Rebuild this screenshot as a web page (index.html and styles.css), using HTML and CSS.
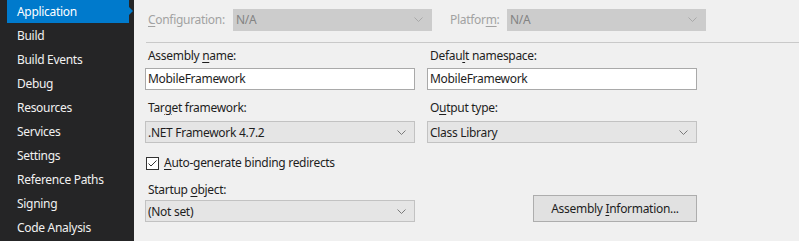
FILE: index.html
```html
<!DOCTYPE html>
<html>
<head>
<meta charset="utf-8">
<link rel="stylesheet" href="styles.css">
</head>
<body>
<div class="app">
  <nav class="sidebar">
    <div class="nav-item selected">Application</div>
    <div class="nav-item">Build</div>
    <div class="nav-item">Build Events</div>
    <div class="nav-item">Debug</div>
    <div class="nav-item">Resources</div>
    <div class="nav-item">Services</div>
    <div class="nav-item">Settings</div>
    <div class="nav-item">Reference Paths</div>
    <div class="nav-item">Signing</div>
    <div class="nav-item">Code Analysis</div>
  </nav>
  <main class="main">
    <div class="topbar">
      <span class="top-label disabled config-label"><u>C</u>onfiguration:</span>
      <div class="select disabled-select top-select">
        <span class="value">N/A</span>
        <svg class="chev" width="9" height="5" viewBox="0 0 9 5"><polyline points="0.5,0.5 4.5,4.5 8.5,0.5" fill="none" stroke="#a9a9a9" stroke-width="1"/></svg>
      </div>
      <span class="top-label disabled platform-label">Platfor<u>m</u>:</span>
      <div class="select disabled-select top-select">
        <span class="value">N/A</span>
        <svg class="chev" width="9" height="5" viewBox="0 0 9 5"><polyline points="0.5,0.5 4.5,4.5 8.5,0.5" fill="none" stroke="#a9a9a9" stroke-width="1"/></svg>
      </div>
    </div>
    <div class="divider"></div>
    <div class="form">
      <div class="row row-1">
        <div class="field">
          <div class="label">Assembly <u>n</u>ame:</div>
          <div class="input">MobileFramework</div>
        </div>
        <div class="field">
          <div class="label">Defau<u>l</u>t namespace:</div>
          <div class="input">MobileFramework</div>
        </div>
      </div>
      <div class="row row-2">
        <div class="field">
          <div class="label">Tar<u>g</u>et framework:</div>
          <div class="select">
            <span class="value">.NET Framework 4.7.2</span>
            <svg class="chev" width="9" height="5" viewBox="0 0 9 5"><polyline points="0.5,0.5 4.5,4.5 8.5,0.5" fill="none" stroke="#7a7a7a" stroke-width="1"/></svg>
          </div>
        </div>
        <div class="field">
          <div class="label">O<u>u</u>tput type:</div>
          <div class="select">
            <span class="value">Class Library</span>
            <svg class="chev" width="9" height="5" viewBox="0 0 9 5"><polyline points="0.5,0.5 4.5,4.5 8.5,0.5" fill="none" stroke="#7a7a7a" stroke-width="1"/></svg>
          </div>
        </div>
      </div>
      <div class="row row-3">
        <label class="check">
          <span class="box"><svg width="11" height="11" viewBox="0 0 11 11"><polyline points="1.5,5.5 4,8 9.5,2.5" fill="none" stroke="#333" stroke-width="1"/></svg></span>
          <span class="check-text"><u>A</u>uto-generate binding redirects</span>
        </label>
      </div>
      <div class="row row-4">
        <div class="field">
          <div class="label">Startup <u>o</u>bject:</div>
          <div class="select">
            <span class="value">(Not set)</span>
            <svg class="chev" width="9" height="5" viewBox="0 0 9 5"><polyline points="0.5,0.5 4.5,4.5 8.5,0.5" fill="none" stroke="#7a7a7a" stroke-width="1"/></svg>
          </div>
        </div>
        <div class="button-cell">
          <div class="button">Assembly <u>I</u>nformation...</div>
        </div>
      </div>
    </div>
  </main>
</div>
</body>
</html>
```

FILE: styles.css
```css
* { box-sizing: border-box; }
html, body { margin: 0; padding: 0; }
body {
  width: 799px;
  height: 241px;
  overflow: hidden;
  font-family: "Noto Sans", "Open Sans", sans-serif;
  font-size: 12px;
  letter-spacing: -0.3px;
  color: #1e1e1e;
  background: #f0f0f0;
}
u { text-decoration-thickness: 1px; text-underline-offset: 2px; }
.app { display: flex; height: 241px; }

.sidebar {
  width: 134px;
  flex: none;
  background: #252526;
  height: 241px;
}
.nav-item {
  height: 24px;
  line-height: 23px;
  padding-left: 17px;
  color: #f1f1f1;
  white-space: nowrap;
}
.nav-item.selected {
  position: relative;
  margin-left: 7px;
  width: 122px;
  height: 23px;
  margin-bottom: 1px;
  padding-left: 10px;
  background: #007acc;
  color: #ffffff;
}
.nav-item.selected::after {
  content: "";
  position: absolute;
  right: -4px;
  top: 7px;
  border-left: 4px solid #007acc;
  border-top: 4px solid transparent;
  border-bottom: 4px solid transparent;
}

.main { flex: 1; background: #f0f0f0; }

.topbar {
  display: flex;
  align-items: center;
  padding: 8px 0 0 14px;
  height: 31px;
}
.top-label { white-space: nowrap; }
.disabled { color: #a2a2a2; }
.config-label { width: 85px; }
.platform-label { width: 57px; margin-left: 18px; }
.top-select { width: 199px; height: 23px; }

.divider {
  height: 1px;
  background: #c9c9c9;
  margin: 11px 0 0 12px;
}

.form { padding-left: 11px; }
.row {
  display: grid;
  grid-template-columns: 270px 270px;
  column-gap: 12px;
}
.row-1 { margin-top: 5px; }
.row-2 { margin-top: 10px; }
.row-3 { margin-top: 13px; }
.row-4 { margin-top: 12px; }

.field { display: flex; flex-direction: column; }
.label {
  height: 16px;
  line-height: 16px;
  padding-left: 3px;
  white-space: nowrap;
}
.row-1 .label { margin-bottom: 4px; }
.row-2 .label { margin-bottom: 5px; }
.row-4 .label { margin-bottom: 2px; }

.input {
  height: 22px;
  line-height: 20px;
  background: #ffffff;
  border: 1px solid #a9a9a9;
  padding-left: 2px;
  white-space: nowrap;
}

.select {
  display: flex;
  align-items: center;
  justify-content: space-between;
  height: 22px;
  background: #e5e5e5;
  border: 1px solid #c2c2c2;
  padding: 0 8px 0 2px;
  white-space: nowrap;
}
.disabled-select {
  background: #cccccc;
  border-color: #cccccc;
  color: #838383;
}
.chev { display: block; flex: none; }

.check {
  display: flex;
  align-items: center;
  height: 14px;
  padding-left: 1px;
}
.box {
  width: 13px;
  height: 13px;
  border: 1px solid #333333;
  background: #ffffff;
  display: flex;
  align-items: center;
  justify-content: center;
  flex: none;
}
.box svg { display: block; }
.check-text { margin-left: 5px; white-space: nowrap; line-height: 14px; }

.button-cell { display: flex; justify-content: flex-end; align-items: flex-end; }
.button {
  width: 164px;
  height: 27px;
  line-height: 25px;
  text-align: center;
  background: #e1e1e1;
  border: 1px solid #adadad;
  white-space: nowrap;
}
```
